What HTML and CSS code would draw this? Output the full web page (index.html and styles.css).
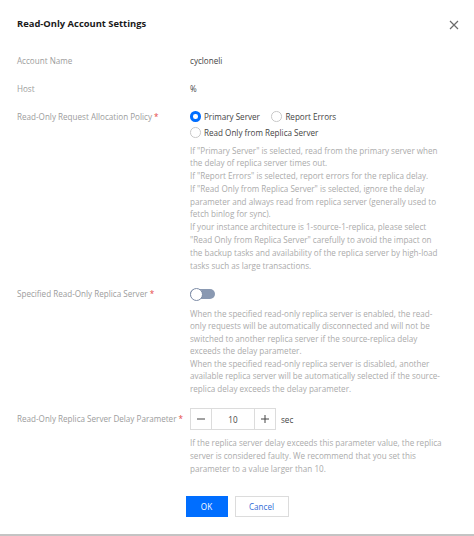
FILE: index.html
```html
<!DOCTYPE html>
<html lang="en">
<head>
<meta charset="utf-8">
<title>Read-Only Account Settings</title>
<link rel="stylesheet" href="styles.css">
</head>
<body>
<div class="dialog">
  <div class="header">
    <h1 class="title">Read-Only Account Settings</h1>
    <button class="close" aria-label="Close">
      <svg width="10" height="10" viewBox="0 0 10 10"><path d="M1 1L9 9M9 1L1 9" stroke="#6b6b6b" stroke-width="1.2" fill="none"/></svg>
    </button>
  </div>

  <div class="form">
    <div class="row">
      <div class="label">Account Name</div>
      <div class="control"><div class="line value">cycloneli</div></div>
    </div>

    <div class="row">
      <div class="label">Host</div>
      <div class="control"><div class="line value">%</div></div>
    </div>

    <div class="row">
      <div class="label">Read-Only Request Allocation Policy <span class="req">*</span></div>
      <div class="control">
        <div class="radios">
          <label class="radio"><span class="dot on"></span>Primary Server</label>
          <label class="radio"><span class="dot"></span>Report Errors</label>
          <label class="radio"><span class="dot"></span>Read Only from Replica Server</label>
        </div>
        <div class="help help-policy">
          <p>If "Primary Server" is selected, read from the primary server when the delay of replica server times out.</p>
          <p>If "Report Errors" is selected, report errors for the replica delay.</p>
          <p>If "Read Only from Replica Server" is selected, ignore the delay parameter and always read from replica server (generally used to fetch binlog for sync).</p>
          <p>If your instance architecture is 1-source-1-replica, please select "Read Only from Replica Server" carefully to avoid the impact on the backup tasks and availability of the replica server by high-load tasks such as large transactions.</p>
        </div>
      </div>
    </div>

    <div class="row">
      <div class="label label-compact">Specified Read-Only Replica Server <span class="req">*</span></div>
      <div class="control">
        <div class="line line-compact"><span class="switch"></span></div>
        <div class="help help-switch">
          <p>When the specified read-only replica server is enabled, the read-only requests will be automatically disconnected and will not be switched to another replica server if the source-replica delay exceeds the delay parameter.</p>
          <p>When the specified read-only replica server is disabled, another available replica server will be automatically selected if the source-replica delay exceeds the delay parameter.</p>
        </div>
      </div>
    </div>

    <div class="row">
      <div class="label label-tall">Read-Only Replica Server Delay Parameter <span class="req">*</span></div>
      <div class="control">
        <div class="stepper-line">
          <div class="stepper">
            <span class="step minus"><svg width="8" height="8" viewBox="0 0 8 8"><path d="M0 4H8" stroke="#444" stroke-width="1"/></svg></span>
            <span class="step-value">10</span>
            <span class="step plus"><svg width="8" height="8" viewBox="0 0 8 8"><path d="M0 4H8M4 0V8" stroke="#444" stroke-width="1"/></svg></span>
          </div>
          <span class="unit">sec</span>
        </div>
        <div class="help help-delay">
          <p>If the replica server delay exceeds this parameter value, the replica server is considered faulty. We recommend that you set this parameter to a value larger than 10.</p>
        </div>
      </div>
    </div>
  </div>

  <div class="footer">
    <button class="btn btn-primary">OK</button>
    <button class="btn btn-default">Cancel</button>
  </div>
</div>
</body>
</html>
```

FILE: styles.css
```css
* { box-sizing: border-box; }

html, body {
  margin: 0;
  padding: 0;
}

body {
  background: #c4c4c4;
  width: 474px;
  height: 536px;
  overflow: hidden;
  font-family: "Open Sans", "Noto Sans", sans-serif;
  font-size: 8.1px;
}

.dialog {
  width: 474px;
  height: 534px;
  background: #fff;
}

.header {
  display: flex;
  justify-content: space-between;
  align-items: center;
  padding: 16px 15px 0 17px;
}

.title {
  margin: 0;
  font-size: 9.4px;
  font-weight: 700;
  line-height: 16px;
  color: #1a1a1a;
}

.close {
  border: 0;
  padding: 0;
  margin-top: 2px;
  background: none;
  width: 10px;
  height: 10px;
  display: flex;
}

.form {
  margin-top: 20.5px;
  padding-left: 17px;
  display: flex;
  flex-direction: column;
  gap: 12px;
}

.row {
  display: flex;
}

.label {
  width: 173px;
  flex: none;
  color: #9c9c9c;
  line-height: 16px;
}

.label-compact { line-height: 12px; }
.label-tall { line-height: 22px; }

.req { color: #e54545; }

.control {
  width: 254px;
}

.line {
  display: flex;
  align-items: center;
  height: 16px;
}

.line-compact { height: 12px; }

.value { color: #444; }

.radios {
  display: flex;
  flex-wrap: wrap;
  column-gap: 11.5px;
}

.radio {
  display: inline-flex;
  align-items: center;
  gap: 3.5px;
  height: 16px;
  color: #444;
}

.dot {
  width: 10.5px;
  height: 10.5px;
  border: 1px solid #c9c9c9;
  border-radius: 50%;
  background: #fff;
}

.dot.on {
  border: 3px solid #006eff;
}

.help {
  color: #ababab;
}

.help p { margin: 0; }

.help-policy {
  line-height: 12.8px;
  margin-top: 4px;
  margin-bottom: 3.5px;
}

.help-switch {
  line-height: 12.5px;
  margin-top: 8px;
  margin-bottom: 1px;
}

.help-delay {
  line-height: 12.8px;
  margin-top: 7px;
}

.switch {
  position: relative;
  width: 25px;
  height: 10px;
  border-radius: 5px;
  background: #8a99b2;
}

.switch::before {
  content: "";
  position: absolute;
  left: 0;
  top: -0.5px;
  width: 11px;
  height: 11px;
  border-radius: 50%;
  background: #fff;
  border: 1.3px solid #7d8ca6;
}

.stepper-line {
  display: flex;
  align-items: center;
  gap: 5px;
  height: 22px;
}

.stepper {
  display: flex;
  height: 22px;
  border: 1px solid #dcdcdc;
}

.step {
  width: 21px;
  display: flex;
  align-items: center;
  justify-content: center;
}

.minus { border-right: 1px solid #dcdcdc; }
.plus { border-left: 1px solid #dcdcdc; }

.step-value {
  width: 42px;
  display: flex;
  align-items: center;
  justify-content: center;
  color: #444;
}

.unit { color: #444; }

.footer {
  margin-top: 20.3px;
  display: flex;
  justify-content: center;
  gap: 7px;
}

.btn {
  height: 21px;
  padding: 0;
  font-family: inherit;
  font-size: 8.1px;
  cursor: pointer;
}

.btn-primary {
  width: 42px;
  background: #006eff;
  color: #fff;
  border: 0;
}

.btn-default {
  width: 54px;
  background: #fff;
  color: #2f6bd6;
  border: 1px solid #dcdcdc;
}
```
